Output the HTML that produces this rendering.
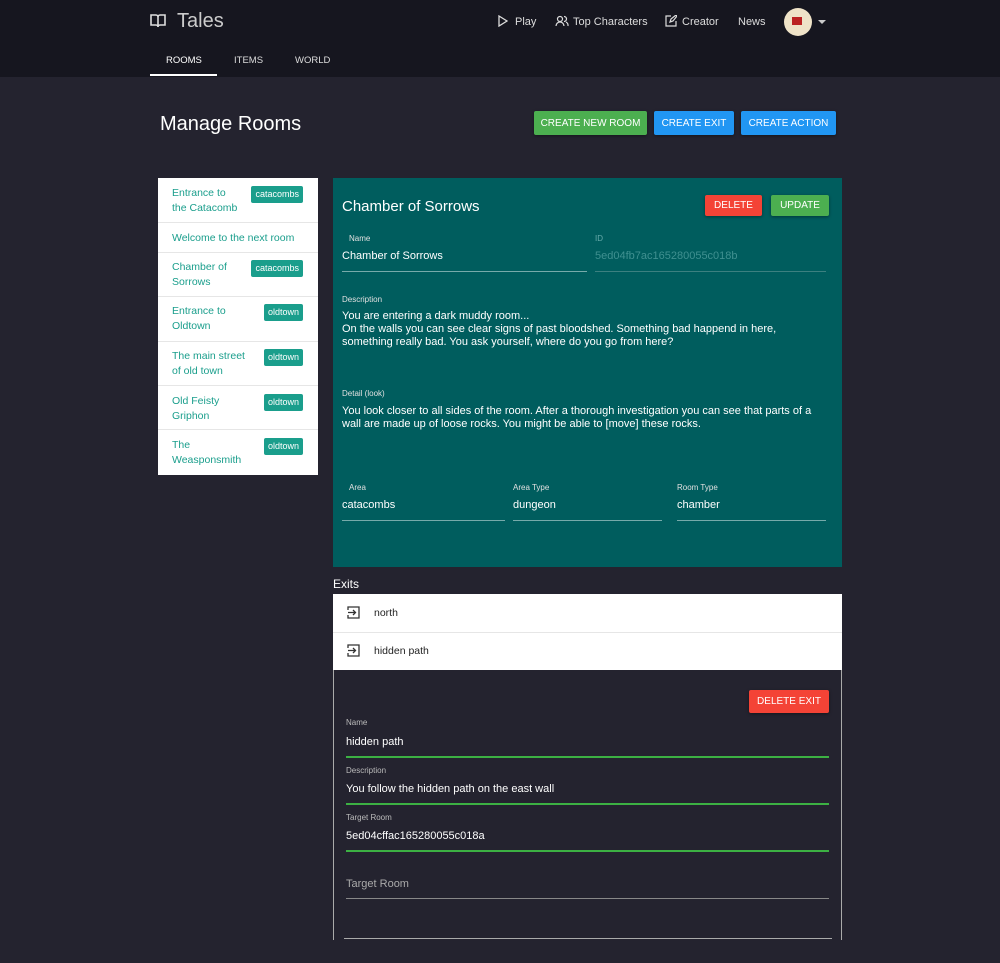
<!DOCTYPE html>
<html><head><style>
*{box-sizing:border-box;margin:0;padding:0}
body{width:1000px;height:963px;background:#24232f;font-family:"Liberation Sans",sans-serif;color:#fff;position:relative;overflow:hidden}
.hdr{position:absolute;left:0;top:0;width:1000px;height:77px;background:#16161f}
.a{position:absolute}
.nav{font-size:11px;color:#ddd;top:16px}
.btn{position:absolute;height:24px;font-size:10px;color:#fff;display:flex;align-items:center;justify-content:center;border-radius:2px;box-shadow:0 1px 3px rgba(0,0,0,.4)}
.list{position:absolute;left:158px;top:178px;width:160px;height:297px;background:#fff}
.it{position:absolute;left:0;width:160px;border-bottom:1px solid #e6e6e6;color:#1a9e8c;font-size:10.5px;line-height:15px;padding-left:14px}
.chip{position:absolute;right:15px;background:#1a9e8c;color:#fff;font-size:9px;padding:1px 4px;border-radius:2px}
.panel{position:absolute;left:333px;top:178px;width:509px;height:389px;background:#005d5e}
.lab{position:absolute;font-size:8px;color:#e0e0e0}
.val{position:absolute;font-size:11px;color:#fff;line-height:12px}
.ln{position:absolute;height:1px;background:#7aa}
.g{height:2px;background:#3cb043}
</style></head><body>
<div class="hdr">
<svg class="a" style="left:150px;top:14px" width="16" height="14" viewBox="0 0 16 14" fill="none" stroke="#ddd" stroke-width="1.6"><path d="M1 1h5a2 2 0 0 1 2 2v10a2 2 0 0 0-2-2H1zM15 1h-5a2 2 0 0 0-2 2v10a2 2 0 0 1 2-2h5z"/></svg>
<div class="a" style="left:177px;top:10px;font-size:20px;color:#ccc">Tales</div>
<svg class="a" style="left:498px;top:15px" width="10" height="12" viewBox="0 0 10 12" fill="none" stroke="#ddd" stroke-width="1.3"><path d="M1 1l8 5-8 5z"/></svg>
<div class="a nav" style="left:515px">Play</div>
<svg class="a" style="left:555px;top:15px" width="14" height="12" viewBox="0 0 14 12" fill="none" stroke="#ddd" stroke-width="1.2"><circle cx="5" cy="4" r="2.5"/><path d="M1 11a4 4 0 0 1 8 0M9 1.5a2.5 2.5 0 0 1 0 5M11 7a4 4 0 0 1 2 4"/></svg>
<div class="a nav" style="left:573px">Top Characters</div>
<svg class="a" style="left:665px;top:15px" width="12" height="12" viewBox="0 0 12 12" fill="none" stroke="#ddd" stroke-width="1.2"><path d="M6 1H1v10h10V6M5 7l1-3 5-4 1 1-4 5z"/></svg>
<div class="a nav" style="left:682px">Creator</div>
<div class="a nav" style="left:738px">News</div>
<div class="a" style="left:784px;top:8px;width:28px;height:28px;border-radius:50%;background:#efe3c8"><div class="a" style="left:8px;top:9px;width:10px;height:8px;background:#b22"></div></div>
<div class="a" style="left:818px;top:20px;border:4px solid transparent;border-top-color:#ccc"></div>
<div class="a" style="left:166px;top:55px;font-size:9.5px;color:#fff">ROOMS</div>
<div class="a" style="left:234px;top:55px;font-size:9.5px;color:#ddd">ITEMS</div>
<div class="a" style="left:295px;top:55px;font-size:9.5px;color:#ddd">WORLD</div>
<div class="a" style="left:150px;top:74px;width:67px;height:2px;background:#fff"></div>
</div>
<div class="a" style="left:160px;top:113px;font-size:20px">Manage Rooms</div>
<div class="btn" style="left:534px;top:111px;width:113px;background:#4caf50">CREATE NEW ROOM</div>
<div class="btn" style="left:654px;top:111px;width:80px;background:#2196f3">CREATE EXIT</div>
<div class="btn" style="left:741px;top:111px;width:95px;background:#2196f3">CREATE ACTION</div>
<div class="list">
<div class="it" style="top:0;height:45px;padding-top:8px">Entrance to<br>the Catacomb<span class="chip" style="top:8px">catacombs</span></div>
<div class="it" style="top:45px;height:30px;padding-top:8px">Welcome to the next room</div>
<div class="it" style="top:75px;height:44px;padding-top:7px">Chamber of<br>Sorrows<span class="chip" style="top:7px">catacombs</span></div>
<div class="it" style="top:119px;height:45px;padding-top:7px">Entrance to<br>Oldtown<span class="chip" style="top:7px">oldtown</span></div>
<div class="it" style="top:164px;height:44px;padding-top:7px">The main street<br>of old town<span class="chip" style="top:7px">oldtown</span></div>
<div class="it" style="top:208px;height:44px;padding-top:8px">Old Feisty<br>Griphon<span class="chip" style="top:8px">oldtown</span></div>
<div class="it" style="top:252px;height:45px;padding-top:8px;border:none">The<br>Weasponsmith<span class="chip" style="top:8px">oldtown</span></div>
</div>
<div class="panel">
<div class="a" style="left:9px;top:20px;font-size:15px">Chamber of Sorrows</div>
<div class="btn" style="left:372px;top:17px;width:57px;background:#f44336;height:21px">DELETE</div>
<div class="btn" style="left:438px;top:17px;width:58px;background:#4caf50;height:21px">UPDATE</div>
<div class="lab" style="left:16px;top:56px">Name</div>
<div class="val" style="left:9px;top:72px">Chamber of Sorrows</div>
<div class="ln" style="left:9px;top:93px;width:245px"></div>
<div class="lab" style="left:262px;top:56px;color:#6aa">ID</div>
<div class="val" style="left:262px;top:72px;color:#3f9090">5ed04fb7ac165280055c018b</div>
<div class="ln" style="left:262px;top:93px;width:231px;background:#3c8080"></div>
<div class="lab" style="left:9px;top:117px">Description</div>
<div class="val" style="left:9px;top:132px;line-height:13px;width:448px">You are entering a dark muddy room...<br>On the walls you can see clear signs of past bloodshed. Something bad happend in here, something really bad. You ask yourself, where do you go from here?</div>
<div class="lab" style="left:9px;top:211px">Detail (look)</div>
<div class="val" style="left:9px;top:227px;line-height:13px;width:485px">You look closer to all sides of the room. After a thorough investigation you can see that parts of a wall are made up of loose rocks. You might be able to [move] these rocks.</div>
<div class="lab" style="left:16px;top:305px">Area</div>
<div class="val" style="left:9px;top:321px">catacombs</div>
<div class="ln" style="left:9px;top:342px;width:163px"></div>
<div class="lab" style="left:180px;top:305px">Area Type</div>
<div class="val" style="left:180px;top:321px">dungeon</div>
<div class="ln" style="left:180px;top:342px;width:149px"></div>
<div class="lab" style="left:344px;top:305px">Room Type</div>
<div class="val" style="left:344px;top:321px">chamber</div>
<div class="ln" style="left:344px;top:342px;width:149px"></div>
</div>
<div class="a" style="left:333px;top:577px;font-size:12px">Exits</div>
<div class="a" style="left:333px;top:594px;width:509px;height:76px;background:#fff"></div>
<div class="a" style="left:333px;top:632px;width:509px;height:1px;background:#e6e6e6"></div>
<svg class="a" style="left:347px;top:606px" width="13" height="13" viewBox="0 0 13 13" fill="none" stroke="#333" stroke-width="1.3"><path d="M1 4V1h11v11H1V9M1 6.5h7M6 4l2.5 2.5L6 9"/></svg>
<svg class="a" style="left:347px;top:644px" width="13" height="13" viewBox="0 0 13 13" fill="none" stroke="#333" stroke-width="1.3"><path d="M1 4V1h11v11H1V9M1 6.5h7M6 4l2.5 2.5L6 9"/></svg>
<div class="a" style="left:374px;top:607px;font-size:10.5px;color:#222">north</div>
<div class="a" style="left:374px;top:645px;font-size:10.5px;color:#222">hidden path</div>
<div class="a" style="left:333px;top:670px;width:509px;height:270px;border-left:1px solid #aaa;border-right:1px solid #aaa"></div>
<div class="btn" style="left:749px;top:690px;width:80px;height:23px;background:#f44336;font-size:10px">DELETE EXIT</div>
<div class="lab" style="left:346px;top:718px;color:#bbb">Name</div>
<div class="val" style="left:346px;top:736px">hidden path</div>
<div class="ln g" style="left:346px;top:756px;width:483px"></div>
<div class="lab" style="left:346px;top:766px;color:#bbb">Description</div>
<div class="val" style="left:346px;top:783px">You follow the hidden path on the east wall</div>
<div class="ln g" style="left:346px;top:803px;width:483px"></div>
<div class="lab" style="left:346px;top:813px;color:#bbb">Target Room</div>
<div class="val" style="left:346px;top:830px">5ed04cffac165280055c018a</div>
<div class="ln g" style="left:346px;top:850px;width:483px"></div>
<div class="val" style="left:346px;top:878px;color:#aaa">Target Room</div>
<div class="ln" style="left:346px;top:898px;width:483px;background:#888"></div>
<div class="ln" style="left:344px;top:938px;width:488px;background:#aaa"></div>
</body></html>
